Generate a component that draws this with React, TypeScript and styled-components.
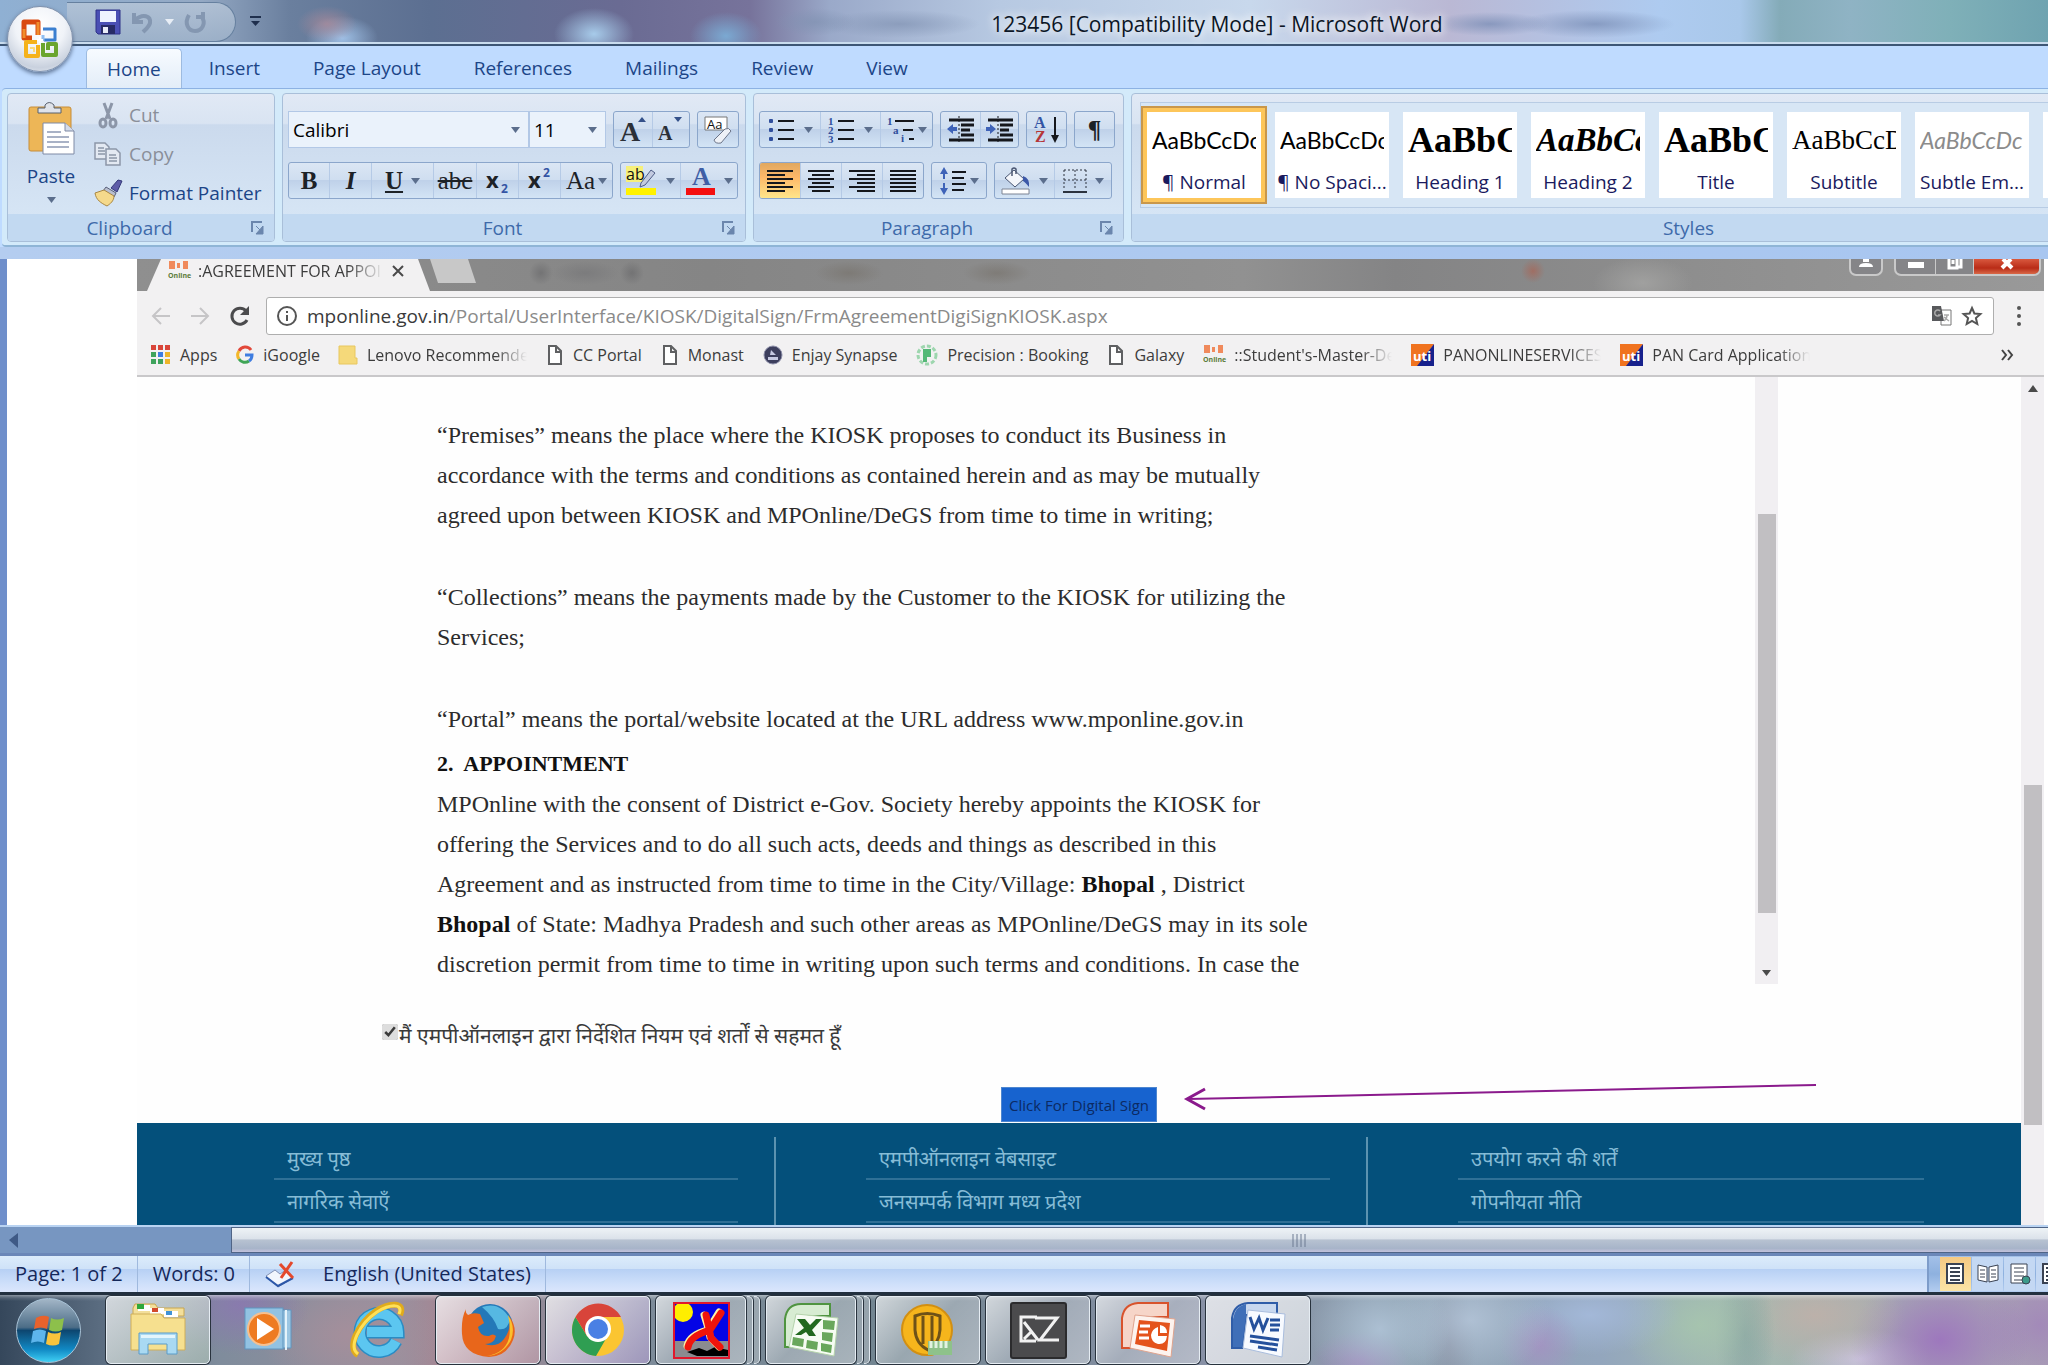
import React from 'react';
import styled, { createGlobalStyle, css } from 'styled-components';

const ui = '"Open Sans", "Noto Sans", sans-serif';
const serif = '"Liberation Serif", serif';
const hindi = '"Noto Sans", "Noto Sans Devanagari", sans-serif';

const Global = createGlobalStyle`
  *, *::before, *::after { box-sizing: border-box; }
  body { margin: 0; background: #fff; font-family: ${ui}; }
  button, select, input { font: inherit; color: inherit; margin: 0; }
  button { padding: 0; border: 0; background: none; }
  svg { display: block; flex: none; overflow: visible; }
`;

const Window = styled.div`
  display: flex;
  flex-direction: column;
  height: 100vh;
  min-height: 900px;
  overflow: hidden;
  background: #bfdbff;
`;

/* ---------- title bar and tabs ---------- */

const Header = styled.header`
  position: relative;
  flex: none;
`;

const TitleBar = styled.div`
  display: flex;
  align-items: center;
  height: 46px;
  padding-left: 67px;
  border-bottom: 2px solid #3d5675;
  box-shadow: inset 0 -2px 0 #c9dcee;
  background:
    radial-gradient(ellipse 30px 18px at 327px 24px, #a98a9acc, transparent),
    radial-gradient(ellipse 36px 22px at 342px 38px, #9fc0e6, transparent),
    radial-gradient(ellipse 40px 26px at 594px 34px, #a7cbea, transparent),
    radial-gradient(ellipse 36px 24px at 726px 36px, #7ba9d2, transparent),
    radial-gradient(ellipse 40px 14px at 815px 22px, #7f91b1aa, transparent),
    radial-gradient(ellipse 80px 14px at 900px 24px, #7f91b1aa, transparent),
    radial-gradient(ellipse 60px 12px at 1490px 24px, #7287b0aa, transparent),
    radial-gradient(ellipse 80px 14px at 1595px 24px, #7287b0aa, transparent),
    linear-gradient(90deg, #8fb0d3 0, #94a9c4 200px, #6a7f9e 290px, #5c6f91 430px, #6a6b93 620px,
      #77739b 750px, #9aa9c9 830px, #b7c9e2 1000px, #c8d8ec 1250px, #bab8d4 1450px,
      #aecbf0 1660px, #a9c8ea 1740px, #84abb8 1780px, #8fb3c4 1850px, #7fb0b8 1950px, #6fa3b0 2048px);
`;

const QuickBar = styled.div`
  display: flex;
  align-items: center;
  gap: 10px;
  width: 169px;
  height: 40px;
  padding-left: 28px;
  border: 1px solid #66809f;
  border-left: 0;
  border-radius: 0 20px 20px 0;
  background: linear-gradient(#b7c6d8cc, #9fb3cacc);
`;

const IconButton = styled.button`
  display: flex;
  align-items: center;
  justify-content: center;
`;

const Customize = styled(IconButton)`
  margin-left: 14px;
`;

const Title = styled.h1`
  flex: 1;
  margin: 0;
  padding: 4px 0 0 125px;
  text-align: center;
  font-size: 21px;
  line-height: 24px;
  font-weight: 400;
  color: #0c1626;
  text-shadow: 0 0 8px #fff, 0 0 12px #fff;
`;

const OfficeButton = styled.button`
  position: absolute;
  top: 6px;
  left: 7px;
  z-index: 2;
  width: 66px;
  height: 66px;
  display: flex;
  align-items: center;
  justify-content: center;
  border: 1px solid #8293ad;
  border-radius: 50%;
  background: radial-gradient(circle at 50% 30%, #fff 0, #f0f3f8 45%, #c9d1de 75%, #eef3fa 100%);
  box-shadow: 0 2px 4px #5a6f8f;
`;

const Tabs = styled.nav`
  display: flex;
  align-items: flex-end;
  gap: 9px;
  height: 42px;
  padding-left: 86px;
  background: #bfdbff;
`;

const Tab = styled.button<{ $active?: boolean }>`
  height: 40px;
  padding: 0 ${p => (p.$active ? 20 : 22)}px;
  font-size: 19px;
  line-height: 24px;
  color: #1c4587;
  border-radius: 5px 5px 0 0;
  ${p => p.$active && css`
    border: 1px solid #9dbbe0;
    border-bottom: 0;
    background: linear-gradient(#f7fbff, #e3edf8);
    margin-right: -4px;
  `}
`;

/* ---------- ribbon ---------- */

const Ribbon = styled.div`
  display: flex;
  flex: none;
  gap: 7px;
  height: 159px;
  margin-left: 2px;
  padding: 4px 0 3px 5px;
  overflow: hidden;
  border-top: 1px solid #8db2e3;
  border-bottom: 2px solid #8fb5d6;
  border-radius: 4px 0 0 4px;
  background: #d3eafa;
`;

const RibbonEdge = styled.div`
  flex: none;
  height: 12px;
  background: linear-gradient(90deg, #b4cdf0, #a8c6f0);
`;

const Group = styled.section<{ $w: number }>`
  display: flex;
  flex-direction: column;
  flex: 0 0 ${p => p.$w}px;
  border: 1px solid #a9bfd9;
  border-radius: 4px;
  overflow: hidden;
  background: linear-gradient(#e1e9f5 0, #d9e4f2 20%, #cbdaed 21%, #d9e8f7 100%);
`;

const GroupBody = styled.div`
  flex: 1;
  display: flex;
  min-height: 0;
`;

const GroupLabel = styled.div`
  display: flex;
  align-items: center;
  height: 27px;
  padding: 0 9px 0 0;
  background: #c2d9f1;
  color: #3e6aaa;
  font-size: 19px;
  line-height: 24px;
  span { flex: 1; text-align: center; }
`;

const Controls = styled.div`
  display: flex;
  flex-direction: column;
  gap: 14px;
  padding: 17px 5px 0 5px;
`;

const ControlRow = styled.div`
  display: flex;
  gap: 7px;
  height: 37px;
`;

const Segment = styled.div`
  display: flex;
  border: 1px solid #8ba6cb;
  border-radius: 3px;
  overflow: hidden;
  background: linear-gradient(#dbe6f4 0, #cfdef0 48%, #bfd1e9 50%, #d3e4f5 100%);
`;

const Cell = styled.button<{ $w: number; $on?: boolean; $tight?: boolean }>`
  display: flex;
  align-items: center;
  justify-content: center;
  gap: ${p => (p.$tight ? 3 : 8)}px;
  width: ${p => p.$w}px;
  font-family: ${serif};
  font-size: 25px;
  line-height: 30px;
  color: #1d2227;
  & + & { border-left: 1px solid #b5cae6; }
  ${p => p.$on && css`background: linear-gradient(#e0a860, #fdb768 40%, #ffe58a);`}
`;

const Combo = styled.label<{ $w: number }>`
  display: flex;
  align-items: center;
  width: ${p => p.$w}px;
  padding: 0 8px 0 4px;
  border: 1px solid #b2c8e6;
  background: #eaf2fb;
  select {
    flex: 1;
    min-width: 0;
    appearance: none;
    border: 0;
    padding: 0;
    background: none;
    font-size: 19px;
    line-height: 24px;
    color: #000;
  }
`;

const Combos = styled.div`display: flex;`;

const PasteButton = styled.button`
  display: flex;
  flex-direction: column;
  align-items: center;
  width: 86px;
  padding: 8px 0 0;
  color: #1c4587;
  font-size: 19px;
  line-height: 24px;
  gap: 9px;
`;

const ClipActions = styled.div`
  display: flex;
  flex-direction: column;
  gap: 13px;
  padding-top: 8px;
`;

const ClipAction = styled.button<{ $off?: boolean }>`
  display: grid;
  grid-template-columns: 28px auto;
  align-items: center;
  gap: 7px;
  height: 26px;
  text-align: left;
  font-size: 19px;
  line-height: 24px;
  white-space: nowrap;
  color: ${p => (p.$off ? '#8a8f99' : '#1c4587')};
`;

const Gallery = styled.div`
  display: flex;
  flex: none;
  gap: 14px;
  width: 1100px;
  height: 106px;
  margin: 8px 0 0 8px;
  padding: 9px 6px;
  border: 1px solid #b8cce4;
  background: #d7e6f5;
`;

const StyleCard = styled.button<{ $on?: boolean }>`
  display: flex;
  flex-direction: column;
  flex: 0 0 114px;
  align-items: center;
  justify-content: space-between;
  height: 86px;
  padding: 7px 0 4px;
  background: #fff;
  ${p => p.$on && css`
    box-shadow: 0 0 0 4px #fdc65a, 0 0 0 6px #c9974a;
  `}
`;

const Sample = styled.span<{ $kind: string }>`
  width: 104px;
  height: 42px;
  overflow: hidden;
  white-space: nowrap;
  text-align: left;
  color: #000;
  ${p => p.$kind === 'body' && css`font: 400 23px/42px Lato, sans-serif;`}
  ${p => p.$kind === 'h1' && css`font: 700 36px/42px ${serif};`}
  ${p => p.$kind === 'h2' && css`font: italic 700 33px/42px ${serif};`}
  ${p => p.$kind === 'sub' && css`font: 400 27px/42px ${serif};`}
  ${p => p.$kind === 'em' && css`font: italic 400 23px/42px Lato, sans-serif; color: #8b8b8b;`}
`;

const StyleName = styled.span`
  font-size: 19px;
  line-height: 24px;
  color: #1a1a5e;
  white-space: nowrap;
`;

/* ---------- document area ---------- */

const Workspace = styled.main`
  display: flex;
  flex: 1;
  min-height: 0;
  padding: 0 4px 0 130px;
  margin-left: 7px;
  background: #fff;
  box-shadow: -7px 0 0 #6f8fcb;
`;

const Browser = styled.div`
  display: flex;
  flex: 1;
  flex-direction: column;
  min-width: 0;
  background: #f2f1f2;
`;

const TabStrip = styled.div`
  display: flex;
  flex: none;
  align-items: flex-start;
  height: 32px;
  background:
    radial-gradient(circle 12px at 404px 14px, #66666899, transparent),
    radial-gradient(circle 12px at 495px 14px, #66666899, transparent),
    radial-gradient(ellipse 34px 12px at 448px 14px, #74747699, transparent),
    radial-gradient(ellipse 34px 12px at 712px 14px, #76716a99, transparent),
    radial-gradient(ellipse 34px 12px at 860px 14px, #76716a99, transparent),
    radial-gradient(circle 12px at 1396px 12px, #a5685acc, transparent),
    radial-gradient(ellipse 50px 26px at 1506px 24px, #a0a09f, transparent),
    linear-gradient(90deg, #8f8f8f, #858585 30%, #919191 58%, #848485 66%, #8d8d8d 80%, #999 100%);
`;

const BrowserTab = styled.div`
  display: flex;
  flex: none;
  align-items: center;
  gap: 8px;
  width: 293px;
  height: 32px;
  padding: 0 0 8px 31px;
  clip-path: polygon(24px 0, 281px 0, 293px 32px, 10px 32px);
  background: #f2f1f2;
`;

const Fade = styled.span<{ $w?: number }>`
  ${p => p.$w && css`
    width: ${p.$w}px;
    overflow: hidden;
    mask-image: linear-gradient(90deg, #000 80%, transparent);
  `}
  white-space: nowrap;
  font-size: 16px;
  line-height: 24px;
  color: #3c3c3c;
`;

const NewTab = styled.button`
  width: 46px;
  height: 24px;
  clip-path: polygon(0 0, 38px 0, 46px 24px, 8px 24px);
  background: #c8c8c8;
`;

const Spacer = styled.div`flex: 1;`;

const Caption = styled.div<{ $gap?: boolean }>`
  display: flex;
  height: 17px;
  margin-right: ${p => (p.$gap ? 11 : 3)}px;
  border: 2px solid #c9c9c9;
  border-top: 0;
  border-radius: 0 0 7px 7px;
  overflow: hidden;
  background: #858588;
`;

const CaptionButton = styled(IconButton)<{ $w: number; $close?: boolean }>`
  align-items: flex-start;
  width: ${p => p.$w}px;
  background: ${p => (p.$close ? 'linear-gradient(#d9583e, #b92c17 60%, #d86847)' : 'none')};
  & + & { border-left: 1px solid #c9c9c9; }
`;

const NavBar = styled.div`
  display: flex;
  flex: none;
  align-items: center;
  gap: 19px;
  height: 46px;
  margin-top: 2px;
  padding: 0 19px 0 14px;
`;

const Omnibox = styled.form`
  display: flex;
  flex: 1;
  align-items: center;
  gap: 10px;
  height: 38px;
  margin-left: -4px;
  padding: 0 11px 0 10px;
  border: 1px solid #aeaeae;
  border-radius: 3px;
  background: #fff;
`;

const Address = styled.div`
  flex: 1;
  font-size: 19px;
  line-height: 24px;
  color: #8a8a8a;
  b { font-weight: 400; color: #3a3a3a; }
`;

const Bookmarks = styled.nav`
  display: flex;
  flex: none;
  align-items: center;
  gap: 19px;
  height: 38px;
  padding: 0 30px 4px 14px;
  border-bottom: 2px solid #c9c8ca;
`;

const Bookmark = styled.a`
  display: flex;
  align-items: center;
  gap: 9px;
  text-decoration: none;
`;

const Viewport = styled.div`
  display: flex;
  flex: 1;
  min-height: 0;
  background: #fefefe;
`;

const Page = styled.div`
  display: flex;
  flex: 1;
  flex-direction: column;
  min-width: 0;
`;

const AgreementFrame = styled.div`
  display: flex;
  flex: none;
  height: 607px;
  margin-right: 243px;
`;

const Agreement = styled.article`
  flex: 1;
  overflow: hidden;
  padding: 38px 440px 0 300px;
  font-family: ${serif};
  font-size: 24px;
  line-height: 40px;
  color: #2c2c2c;
  white-space: nowrap;
  p { margin: 0 0 42px; }
  p.tight { margin: 0; }
  h2 { margin: 0; padding-top: 5px; font-size: 22px; line-height: 40px; color: #111; }
  b { color: #111; }
`;

const Track = styled.div<{ $w: number }>`
  display: flex;
  flex-direction: column;
  align-items: center;
  flex: 0 0 ${p => p.$w}px;
  padding: 8px 0;
  background: #f1eff2;
`;

const Thumb = styled.div<{ $h: number; $top: number }>`
  width: 18px;
  height: ${p => p.$h}px;
  margin-top: ${p => p.$top}px;
  background: #c1bfc2;
`;

const Consent = styled.label`
  display: flex;
  align-items: center;
  gap: 1px;
  height: 28px;
  margin: 37px 0 0 245px;
  font-family: ${hindi};
  font-size: 21px;
  line-height: 28px;
  color: #3a3a3a;
  input { width: 16px; height: 16px; accent-color: #ddd; margin-bottom: 6px; }
`;

const SignRow = styled.div`
  display: flex;
  align-items: flex-start;
  gap: 28px;
  height: 36px;
  margin-top: 38px;
  padding-left: 864px;
`;

const SignButton = styled.button`
  width: 156px;
  height: 35px;
  border: 1px solid #4d86cf;
  background: #1763cf;
  color: #0b2a63;
  font-size: 15px;
  line-height: 24px;
  white-space: nowrap;
`;

const SiteFooter = styled.footer`
  display: grid;
  grid-template-columns: repeat(3, 1fr);
  flex: 1;
  min-height: 0;
  overflow: hidden;
  padding: 14px 61px 0 47px;
  background: #04507b;
`;

const FooterColumn = styled.div`
  padding: 0 36px 0 90px;
  overflow: hidden;
  border-right: 2px solid #5c93b0;
  &:last-child { border-right: 0; }
`;

const FooterLink = styled.a`
  display: block;
  height: 43px;
  padding: 8px 0 0 13px;
  border-bottom: 2px solid #2f7096;
  font-family: ${hindi};
  font-size: 20px;
  line-height: 28px;
  color: #86bcd6;
  text-decoration: none;
  white-space: nowrap;
`;

/* ---------- bottom bars ---------- */

const HScroll = styled.div`
  display: flex;
  flex: none;
  align-items: center;
  height: 31px;
  padding-left: 9px;
  border-top: 2px solid #b9d3f2;
  border-bottom: 3px solid #6b87b8;
  background: #7796c1;
`;

const HThumb = styled.div`
  display: flex;
  flex: 1;
  align-items: center;
  justify-content: center;
  height: 26px;
  margin-left: 213px;
  padding-left: 317px;
  border: 1px solid #4f6486;
  border-right: 0;
  background: linear-gradient(#eef3f6 0, #dbe2ea 45%, #b7c2d1 50%, #a7b4c9 85%, #c3c2dd 100%);
`;

const StatusBar = styled.div`
  display: flex;
  flex: none;
  align-items: stretch;
  height: 39px;
  border-bottom: 3px solid #22303f;
  background: linear-gradient(#dcecfb 0, #cfe2f8 35%, #b7d0f4 37%, #cddffa 75%, #dbe6fc 100%);
  font-size: 20px;
  line-height: 24px;
  color: #15285a;
`;

const StatusItem = styled.div`
  display: flex;
  align-items: center;
  gap: 28px;
  padding: 0 14px 0 15px;
  border-right: 1px solid #9fb9de;
  white-space: nowrap;
`;

const Views = styled.div`
  display: flex;
  align-items: center;
  gap: 1px;
  width: 121px;
  overflow: hidden;
  padding-left: 11px;
  border-left: 2px solid #7d9cca;
  background: linear-gradient(#a3c0e8, #8eb1df 50%, #b4cdf0);
`;

const ViewButton = styled(IconButton)<{ $on?: boolean }>`
  flex: none;
  width: 31px;
  height: 34px;
  background: ${p => (p.$on ? 'linear-gradient(#f5c983, #fbe3a5)' : '#c4d8f3')};
`;

const Taskbar = styled.footer`
  display: flex;
  flex: none;
  align-items: center;
  gap: 6px;
  height: 70px;
  padding-left: 16px;
  background:
    linear-gradient(#ffffff66 0, #ffffff22 3px, transparent 6px),
    radial-gradient(ellipse 70px 50px at 240px 10px, #8c74b4bb, transparent),
    radial-gradient(ellipse 90px 60px at 350px 40px, #a58f9b, transparent),
    radial-gradient(ellipse 70px 60px at 1380px 34px, #b4c8dccc, transparent),
    radial-gradient(ellipse 50px 30px at 1360px 66px, #a184bbcc, transparent),
    radial-gradient(ellipse 80px 60px at 1470px 25px, #b7c8dccc, transparent),
    radial-gradient(ellipse 26px 60px at 1450px 50px, #7f8496aa, transparent),
    radial-gradient(ellipse 40px 40px at 1540px 50px, #a78fc4bb, transparent),
    radial-gradient(ellipse 90px 40px at 1590px 20px, #a3b8d8, transparent),
    radial-gradient(ellipse 80px 60px at 1700px 30px, #a8c8adcc, transparent),
    radial-gradient(ellipse 30px 70px at 1745px 40px, #77949caa, transparent),
    radial-gradient(ellipse 90px 50px at 1815px 20px, #c2b0a8cc, transparent),
    radial-gradient(ellipse 90px 70px at 1940px 45px, #9c70bfdd, transparent),
    radial-gradient(ellipse 70px 30px at 1860px 64px, #d2c6e4cc, transparent),
    radial-gradient(ellipse 60px 60px at 2040px 30px, #a184bacc, transparent),
    linear-gradient(90deg, #35475b 0, #5a6c80 100px, #7f8c9c 220px, #98909e 400px, #a48794 440px,
      #7d8b99 640px, #718490 900px, #8790a5 1200px, #8c9fae 1400px, #93a6bd 1600px, #a3b9b0 1750px, #a9a0b4 2048px);
`;

const StartOrb = styled.button`
  width: 65px;
  height: 65px;
  margin-right: 19px;
  border: 1px solid #a9c4d8;
  border-radius: 50%;
  display: flex;
  align-items: center;
  justify-content: center;
  background: linear-gradient(#a3b6c7 0, #4c6d87 45%, #0d4670 50%, #1189c4 80%, #3fd0f5 100%);
`;

const glass = css`
  border: 1px solid #e6edf3;
  border-radius: 5px;
  box-shadow: 0 0 0 1px #28323d;
  background: linear-gradient(135deg, #ffffffa8, #ffffff48 50%, #ffffff60);
`;

const TaskItem = styled.button<{ $plain?: boolean; $tint?: string }>`
  display: flex;
  align-items: center;
  justify-content: center;
  flex: 1;
  height: 68px;
  ${p => !p.$plain && glass}
  ${p => p.$tint && css`background: linear-gradient(135deg, #ffffffb8, ${p.$tint});`}
`;

const TaskSlot = styled.div`
  display: flex;
  gap: 1px;
  width: 104px;
`;

const StackEdge = styled.div`
  width: 6px;
  height: 68px;
  border: 1px solid #dfe7ee;
  border-left: 0;
  border-radius: 0 5px 5px 0;
  box-shadow: 1px 0 0 #28323d;
  background: #ffffff40;
`;

/* ---------- small drawings ---------- */

const Caret = ({ c = '#5b6e8c' }: { c?: string }) => (
  <svg width="9" height="6" viewBox="0 0 9 6"><path d="M0 0h9L4.500 6z" fill={c} /></svg>
);

const Launcher = () => (
  <svg width="14" height="14" viewBox="0 0 14 14">
    <path d="M1 11V1h10" fill="none" stroke="#6b86ad" strokeWidth="2" />
    <path d="M5 5l6 6M12 5v8H5z" fill="#6b86ad" stroke="#6b86ad" />
  </svg>
);

const OfficeLogo = () => (
  <svg width="42" height="44" viewBox="0 0 42 44" fill="none" strokeLinejoin="round">
    <path d="M19 18V5H5v16h8" stroke="#d9480f" strokeWidth="5" />
    <path d="M19 5v13M5 12v9" stroke="#f08c2c" strokeWidth="3" />
    <path d="M24 12h12v11H25" stroke="#3b7fd0" strokeWidth="3" />
    <path d="M24 18v6" stroke="#8fbdf0" strokeWidth="3" />
    <path d="M18 25H7v14h12V28" stroke="#f5b21b" strokeWidth="4" />
    <path d="M11 31h4v4" stroke="#fbdc7a" strokeWidth="2" />
    <path d="M24 26v12h13V27h-8v6" stroke="#6aa52e" strokeWidth="4" />
    <path d="M21 20v6M18 23h6" stroke="#fff" strokeWidth="2" />
  </svg>
);

const SaveIcon = () => (
  <svg width="26" height="26" viewBox="0 0 26 26">
    <path d="M1 1h24v24H3l-2-2z" fill="#4a4fb4" stroke="#2f3388" />
    <path d="M5 2h16v11H5z" fill="#eef3ff" />
    <path d="M6 16h14v9H6z" fill="#272b66" /><path d="M8 18h5v6H8z" fill="#e9ecf8" />
  </svg>
);

const UndoIcon = () => (
  <svg width="24" height="24" viewBox="0 0 24 24" fill="none" stroke="#8497b1" strokeWidth="4">
    <path d="M3 3v9h9M4 10c8-7 16-4 15 3-1 4-4 6-7 9" />
  </svg>
);

const RedoIcon = () => (
  <svg width="22" height="24" viewBox="0 0 22 24" fill="none" stroke="#8497b1" strokeWidth="4">
    <path d="M5 5c-5 8-1 16 6 16s12-8 6-15M12 7h7V2" />
  </svg>
);

const PasteIcon = () => (
  <svg width="48" height="53" viewBox="0 0 48 53">
    <rect x="2" y="5" width="42" height="44" rx="2" fill="#edb657" stroke="#c68d3a" />
    <path d="M11 9V6h7V3q4-5 9 0v3h7v5H11z" fill="#dfe3ea" stroke="#59606d" />
    <path d="M16 21h22l9 8v23H16z" fill="#fff" stroke="#7f8aa5" />
    <path d="M38 21v8h9" fill="#d4dbea" stroke="#7f8aa5" />
    <path d="M20 30h14M20 35h22M20 40h22M20 45h22" stroke="#a9b2c6" strokeWidth="2" />
  </svg>
);

const CutIcon = () => (
  <svg width="26" height="26" viewBox="0 0 26 26" fill="none" stroke="#8c96a8" strokeWidth="3">
    <path d="M10 1l6 16M18 1l-6 16" /><ellipse cx="9" cy="21" rx="3" ry="4" /><ellipse cx="19" cy="21" rx="3" ry="4" />
  </svg>
);

const CopyIcon = () => (
  <svg width="28" height="24" viewBox="0 0 28 24" fill="#e3e9f2" stroke="#8c96a8" strokeWidth="1.500">
    <path d="M1 1h10l4 4v12H1z" /><path d="M12 7h10l4 4v12H12z" />
    <path d="M4 6h6M4 9h7M4 12h7M15 13h7M15 16h8M15 19h8" />
  </svg>
);

const BrushIcon = () => (
  <svg width="28" height="26" viewBox="0 0 28 26">
    <path d="M17 8l7-8 4 1-5 11z" fill="#5d5ca8" stroke="#333878" />
    <path d="M12 7l10 6-2 4-11-6z" fill="#b9bfd0" stroke="#59607a" />
    <path d="M10 10l10 6c0 5-4 8-7 10C7 23 2 20 1 13z" fill="#f5d98b" stroke="#a98743" />
  </svg>
);

const Grow = ({ up }: { up?: boolean }) => (
  <svg width="27" height="26" viewBox="0 0 27 26">
    <text x="0" y={up ? 24 : 23} fontFamily="Liberation Serif" fontWeight="700" fontSize={up ? 28 : 20} fill="#2b3038">A</text>
    <path d={up ? 'M18 5h8l-4-5z' : 'M16 0h8l-4 5z'} fill="#34518a" />
  </svg>
);

const ClearIcon = () => (
  <svg width="30" height="28" viewBox="0 0 30 28">
    <path d="M2 1h22v13H2z" fill="#fff" stroke="#777" />
    <text x="4" y="13" fontFamily="Open Sans" fontSize="13" fill="#111">Aa</text>
    <path d="M11 24l11-11q4-2 6 2L18 27q-6 1-7-3z" fill="#eef1f7" stroke="#6b7488" />
  </svg>
);

const HighlightIcon = () => (
  <svg width="32" height="30" viewBox="0 0 32 30">
    <path d="M0 0h17v16H0z" fill="#f6f07a" />
    <text x="0" y="14" fontFamily="Open Sans" fontSize="16" fill="#111">ab</text>
    <path d="M15 17L25 4l4 3-10 12-5 2z" fill="#c3cbe0" stroke="#4e5d86" />
    <path d="M0 22h30v7H0z" fill="#fff200" />
  </svg>
);

const FontColorIcon = () => (
  <svg width="30" height="30" viewBox="0 0 30 30">
    <text x="6" y="19" fontFamily="Liberation Serif" fontWeight="700" fontSize="26" fill="#3f5fa6">A</text>
    <path d="M0 22h29v7H0z" fill="#f40f10" />
  </svg>
);

const ScriptIcon = ({ up }: { up?: boolean }) => (
  <svg width="24" height="26" viewBox="0 0 24 26" fontFamily="Open Sans" fontWeight="700">
    <text x="0" y="20" fontSize="22" fill="#1d2227">x</text>
    <text x="15" y={up ? 9 : 25} fontSize="12" fill="#3455a4">2</text>
  </svg>
);

const ListIcon = ({ kind }: { kind: 'dot' | 'num' | 'multi' }) => (
  <svg width="28" height="26" viewBox="0 0 28 26" fontFamily="Liberation Serif" fontWeight="700" fontSize="11" fill="#2f4e9c">
    {kind === 'dot' && [4, 13, 22].map(y => <rect key={y} x="1" y={y - 2} width="4" height="4" rx="1" />)}
    {kind === 'num' && [1, 2, 3].map(n => <text key={n} x="0" y={n * 9 - 1}>{n}</text>)}
    {kind === 'multi' && <><text x="0" y="8">1</text><text x="6" y="17">a</text><text x="14" y="25">i</text></>}
    <path
      d={kind === 'multi' ? 'M8 4h19M16 13h10M22 22h5' : 'M10 4h16M10 13h16M10 22h16'}
      stroke="#15171c" strokeWidth="2" />
  </svg>
);

const IndentIcon = ({ right }: { right?: boolean }) => (
  <svg width="28" height="27" viewBox="0 0 28 27">
    <path d="M2 4h25M14 9h13M14 14h9M14 19h13M2 24h25" stroke="#15171c" strokeWidth="3" />
    <path d="M12 0v27" stroke="#15171c" strokeDasharray="2 2" />
    <path d={right ? 'M10 13L4 8v3H0v4h4v3z' : 'M0 13l6-5v3h4v4H6v3z'} fill="#3f63b8" />
  </svg>
);

const SortIcon = () => (
  <svg width="26" height="28" viewBox="0 0 26 28" fontFamily="Liberation Serif" fontWeight="700" fontSize="16">
    <text x="0" y="12" fill="#3455a4">A</text><text x="1" y="26" fill="#b53538">Z</text>
    <path d="M21 1v23" stroke="#15171c" strokeWidth="2" /><path d="M17 19h8l-4 8z" fill="#15171c" />
  </svg>
);

const AlignIcon = ({ x1, x2 }: { x1: number; x2: number }) => (
  <svg width="26" height="22" viewBox="0 0 26 22" stroke="#15171c" strokeWidth="2">
    <path d={[1, 5, 9, 13, 17, 21].map((y, i) => (i % 2 ? `M${x1} ${y}H${x2}` : `M0 ${y}H26`)).join('')} />
  </svg>
);

const SpacingIcon = () => (
  <svg width="28" height="28" viewBox="0 0 28 28">
    <path d="M5 4v8M5 16v8" stroke="#3f63b8" strokeWidth="2" />
    <path d="M1 7l4-7 4 7zM1 21l4 7 4-7z" fill="#3f63b8" />
    <path d="M13 5h14M13 11h12M13 17h14M13 23h12" stroke="#15171c" strokeWidth="2" />
  </svg>
);

const BucketIcon = () => (
  <svg width="30" height="28" viewBox="0 0 30 28">
    <path d="M4 11L13 3l10 9-9 8z" fill="#f4f6fb" stroke="#4a5672" />
    <path d="M11 9V2q2-2 4 0v5" fill="none" stroke="#4a5672" strokeWidth="1.500" />
    <path d="M22 9q7 2 6 11-4-5-6-6z" fill="#3c58a8" />
    <path d="M1 22h27v5H1z" fill="#fff" stroke="#7c8494" />
  </svg>
);

const BorderIcon = () => (
  <svg width="24" height="24" viewBox="0 0 24 24" fill="none" stroke="#2c333f">
    <path d="M1 1h22M1 11h22M1 1v20M12 1v20M23 1v20" strokeDasharray="2 2" />
    <path d="M0 23h24" strokeWidth="2" />
  </svg>
);

const FileIcon = () => (
  <svg width="18" height="20" viewBox="0 0 18 20" fill="#fff" stroke="#5f6062" strokeWidth="2">
    <path d="M3 1h7l5 5v13H3zM10 1v6h5" />
  </svg>
);

const AppsIcon = () => (
  <svg width="20" height="20" viewBox="0 0 20 20">
    {['#d9463a', '#d9463a', '#d9463a', '#3fa35c', '#3f7de0', '#efb52a', '#3fa35c', '#3fa35c', '#efb52a'].map((c, i) => (
      <rect key={i} x={(i % 3) * 7} y={Math.floor(i / 3) * 7} width="5" height="5" fill={c} />
    ))}
  </svg>
);

const GoogleIcon = () => (
  <svg width="18" height="18" viewBox="0 0 18 18" fill="none" strokeWidth="3">
    <path d="M15 4A7 7 0 0 0 3 5" stroke="#e2483a" /><path d="M3 5a7 7 0 0 0 0 8" stroke="#f3b729" />
    <path d="M3 13a7 7 0 0 0 10 2" stroke="#3fa556" /><path d="M13 15q3-2 3-6H9" stroke="#3f7de0" />
  </svg>
);

const FolderIcon = () => (
  <svg width="19" height="20" viewBox="0 0 19 20"><path d="M0 1h16v12h2v6H0z" fill="#f5d97a" stroke="#e8c75e" /></svg>
);

const OrbIcon = () => (
  <svg width="20" height="20" viewBox="0 0 20 20">
    <circle cx="10" cy="10" r="9" fill="#3d3f5e" stroke="#8c8ea8" />
    <path d="M5 12h10v3H5zM8 5l5 5H7z" fill="#c6c9e2" />
  </svg>
);

const PrecisionIcon = () => (
  <svg width="22" height="22" viewBox="0 0 22 22">
    <circle cx="11" cy="11" r="9" fill="none" stroke="#9dd6ae" strokeWidth="3" strokeDasharray="4 2" />
    <path d="M7 5h8v8h-4v5H7z" fill="#55b877" />
  </svg>
);

const OnlineIcon = () => (
  <svg width="22" height="20" viewBox="0 0 22 20">
    <path d="M1 0h6v8H1zM9 2h3v5H9zM15 0h5v8h-5z" fill="#f08a5c" />
    <text x="0" y="17" fontFamily="Open Sans" fontWeight="700" fontSize="7" fill="#5d7d3c">Online</text>
  </svg>
);

const UtiIcon = () => (
  <svg width="23" height="22" viewBox="0 0 23 22">
    <path d="M0 0h23L8 22H0z" fill="#f0731f" /><path d="M23 0v22H6z" fill="#17218c" />
    <text x="2" y="17" fontFamily="Open Sans" fontWeight="700" fontSize="13" fill="#fff">uti</text>
  </svg>
);

const ArrowNav = ({ right }: { right?: boolean }) => (
  <svg width="20" height="18" viewBox="0 0 20 18" fill="none" stroke="#c6c5c7" strokeWidth="2">
    <path d={right ? 'M1 9h17M10 1l8 8-8 8' : 'M19 9H2M10 1L2 9l8 8'} />
  </svg>
);

const ReloadIcon = () => (
  <svg width="22" height="22" viewBox="0 0 22 22" fill="none" stroke="#4b4b4d" strokeWidth="3">
    <path d="M18 15a8 8 0 1 1-1-9" /><path d="M20 1v9h-9z" fill="#4b4b4d" stroke="none" />
  </svg>
);

const InfoIcon = () => (
  <svg width="20" height="20" viewBox="0 0 20 20" fill="none" stroke="#555" strokeWidth="2">
    <circle cx="10" cy="10" r="9" /><path d="M10 9v6M10 5v2" />
  </svg>
);

const TranslateIcon = () => (
  <svg width="20" height="20" viewBox="0 0 20 20">
    <path d="M9 4h10v15H9z" fill="#fff" stroke="#777" /><path d="M0 0h9l3 15H0z" fill="#58595c" />
    <path d="M8 5a3 3 0 1 0 0 4H6M12 9h5M15 9q0 4-3 6M12 11l5 4" fill="none" stroke="#aaa" strokeWidth="1.500" />
  </svg>
);

const StarIcon = () => (
  <svg width="20" height="20" viewBox="0 0 20 20" fill="none" stroke="#555" strokeWidth="2">
    <path d="M10 2l2.400 5.500 6 .5-4.500 4 1.400 6L10 15l-5.300 3 1.400-6L1.600 8l6-.5z" />
  </svg>
);

const PointerArrow = () => (
  <svg width="632" height="30" viewBox="0 0 632 30" fill="none" stroke="#8a1a8c">
    <path d="M20 2L2 12l18 10" strokeWidth="3" /><path d="M3 12L631 -2" strokeWidth="2" />
  </svg>
);

const WindowsFlag = () => (
  <svg width="42" height="42" viewBox="0 0 42 42">
    <path d="M8 9q7-4 13-1l-2 12q-6-3-13 0z" fill="#e8622c" />
    <path d="M23 9q6 3 13 0l-2 12q-6 3-13 0z" fill="#8dc04b" />
    <path d="M5 22q7-3 13 0l-2 12q-6-3-13 0z" fill="#5db5ec" />
    <path d="M20 23q7 3 13 0l-2 12q-6 3-13 0z" fill="#f8c33c" />
  </svg>
);

const ExplorerIcon = () => (
  <svg width="56" height="54" viewBox="0 0 56 54">
    <path d="M3 5l2-4h20l3 4h26v8H3z" fill="#f3df9a" stroke="#c9a64e" />
    <path d="M8 2h12v6H8z" fill="#fff" /><path d="M7 1h7v5H7z" fill="#2ea83c" />
    <path d="M20 5h14v6H20z" fill="#fff" /><path d="M22 5h6v4h-6z" fill="#d24a2c" />
    <path d="M34 8h14v6H34z" fill="#fff" /><path d="M36 8h6v4h-6z" fill="#3f92d6" />
    <path d="M1 11h30l3 4h21v32H1z" fill="#f6e08f" stroke="#cfae58" />
    <path d="M9 30h38v21H37V41H18v10H9z" fill="#a9d9f2" stroke="#5a9cc9" />
    <path d="M11 32h34v3H11z" fill="#e3f5fd" />
  </svg>
);

const MediaIcon = () => (
  <svg width="48" height="46" viewBox="0 0 48 46">
    <path d="M38 3h9v38h-9z" fill="#9cc6e2" stroke="#5e95bf" /><path d="M42 3v40" stroke="#e4f3fb" strokeWidth="2" />
    <rect x="1" y="1" width="38" height="41" fill="#92c2e2" stroke="#5e95bf" />
    <circle cx="20" cy="22" r="16" fill="#ee7b22" stroke="#f7c08f" strokeWidth="2" />
    <path d="M13 11l17 11-17 11z" fill="#fff" />
  </svg>
);

const IeIcon = () => (
  <svg width="56" height="56" viewBox="0 0 56 56" fill="none">
    <path d="M46 39A19 19 0 1 1 48 30H17" stroke="#2a8cc4" strokeWidth="13" />
    <path d="M46 39A19 19 0 1 1 48 30H17" stroke="#5cc6f0" strokeWidth="10" />
    <path d="M8 53C-4 46 8 22 26 9 40 0 56 0 50 13" stroke="#e0ab1c" strokeWidth="6" />
    <path d="M8 52C-2 45 9 22 27 10 40 2 54 1 49 12" stroke="#ffe057" strokeWidth="3" />
  </svg>
);

const FirefoxIcon = () => (
  <svg width="56" height="56" viewBox="0 0 56 56">
    <circle cx="30" cy="25" r="23" fill="#2478b8" /><path d="M22 5q18-6 28 12-2 12-12 10-4-12-16-22z" fill="#56b8e2" />
    <path d="M6 7q-1 4 2 6 5-3 12-1l4 9-6 4q2 10 11 9 4-3 7 0-2 8-11 8 12 4 19-5 8-10 5-23 9 12 4 24-7 17-24 17Q3 53 2 32 1 16 6 7z" fill="#e8661b" />
    <path d="M48 13q8 12 3 25-8 15-24 16 18-3 22-18 2-10-1-23z" fill="#fbc02d" />
  </svg>
);

const ChromeIcon = () => (
  <svg width="54" height="54" viewBox="0 0 54 54">
    <circle cx="27" cy="27" r="26" fill="#fbc531" />
    <path d="M4.500 14A26 26 0 0 0 25 53L36 34 27 39 16 33z" fill="#2f9e52" />
    <path d="M4.500 14A26 26 0 0 1 50 14H27L16 33z" fill="#d8443a" />
    <circle cx="27" cy="26" r="13" fill="#fff" /><circle cx="27" cy="26" r="10" fill="#4a80e4" />
  </svg>
);

const RunnerIcon = () => (
  <svg width="57" height="57" viewBox="0 0 57 57">
    <path d="M0 0h57v57H0z" fill="#0404e6" /><path d="M0 39h57v18H0z" fill="#8b8b90" />
    <circle cx="10" cy="10" r="10" fill="#ffee00" />
    <path d="M14 50l12-4 8 3 8-4 13 3v6H24z" fill="#000" />
    <path d="M14 44Q16 33 35 28L46 10M31 13l4 13 2 9 9 10" fill="none" stroke="#fff3a8" strokeWidth="7" strokeLinecap="round" />
    <path d="M15 45Q17 34 37 28L48 11M33 13l3 13 2 10 9 9" fill="none" stroke="#f0140c" strokeWidth="7" strokeLinecap="round" />
    <rect x="1" y="1" width="55" height="55" fill="none" stroke="#e0182c" strokeWidth="2" />
  </svg>
);

const ExcelIcon = () => (
  <svg width="56" height="54" viewBox="0 0 56 54">
    <path d="M2 44V16Q4 1 18 1h29v12H14v31z" fill="#d7ecd2" stroke="#4f9440" strokeWidth="2" />
    <path d="M13 11l42 4-4 38-45-9z" fill="#f6fcf3" stroke="#b5d3ac" />
    <path d="M40 17l12 1-1 9-11-1zM39 29l11 1-1 9-10-2zM38 40l11 2-1 8-10-2zM24 37l11 2-1 8-11-2zM10 34l11 2-1 8-11-2z" fill="#69a75c" />
    <path d="M14 16h8l5 6 6-6h6L29 27l4 6h-7l-3-4-5 3h-6l9-7z" fill="#22691f" />
  </svg>
);

const CoinIcon = () => (
  <svg width="54" height="54" viewBox="0 0 54 54">
    <circle cx="26" cy="27" r="25" fill="#f6b51c" stroke="#d28f12" strokeWidth="2" />
    <path d="M14 13q12-5 25 0v14q-1 14-12 20-12-6-13-20zM22 13v28M31 13v28" fill="none" stroke="#6e5218" strokeWidth="3" />
    <path d="M27 38h24v14H27z" fill="#8ec28a" />
    <path d="M30 38v7M35 38v7M40 38v7M45 38v7" stroke="#e2f2e2" strokeWidth="3" />
  </svg>
);

const LzIcon = () => (
  <svg width="57" height="57" viewBox="0 0 57 57">
    <rect x="1" y="1" width="55" height="55" rx="2" fill="#4b4b4d" stroke="#2b2b2d" strokeWidth="2" />
    <path d="M27 15H11v24h15M14 20l14 18M22 29l-8 8M25 16h22L30 38h19" fill="none" stroke="#f2f2f2" strokeWidth="3" />
  </svg>
);

const PptIcon = () => (
  <svg width="56" height="56" viewBox="0 0 56 56">
    <path d="M2 46V16Q4 2 18 1h30v14H16l-4 31z" fill="#f6d5c8" stroke="#d8532c" strokeWidth="2" />
    <path d="M15 13l40 4-4 38-41-9z" fill="#fdf3ee" stroke="#e0a48f" />
    <path d="M19 18l31 3-3 28-32-7z" fill="#e4531c" />
    <path d="M20 24h10M19 30h9M19 36h10" stroke="#fff" strokeWidth="3" />
    <path d="M38 25v9h9q-1 9-9 8-7-2-7-9 1-6 7-8z" fill="#fff" /><path d="M40 23q7 1 7 8h-7z" fill="#fff" />
  </svg>
);

const WordIcon = () => (
  <svg width="56" height="56" viewBox="0 0 56 56">
    <path d="M2 46V16Q4 2 18 1h29v12H16l-4 33z" fill="#c8d8ef" stroke="#2f5da8" strokeWidth="2" />
    <path d="M3 45V17Q5 4 16 2v12l-4 31z" fill="#3f6fb8" />
    <path d="M18 8l37 4-3 43-39-9z" fill="#f7faff" stroke="#a9bddd" />
    <path d="M20 15l4 12 5-11 4 12 5-12M40 18h10M40 23h10M40 28h9M20 34l29 4M20 39l28 4M28 45l19 3" fill="none" stroke="#24509c" strokeWidth="3" />
  </svg>
);

const SpellIcon = () => (
  <svg width="30" height="27" viewBox="0 0 30 27">
    <path d="M1 15l9-6 5 4 6-4 7 8-15 9z" fill="#f2f6fd" stroke="#8290b4" strokeWidth="1" />
    <path d="M1 16l12 9 15-8" fill="none" stroke="#2c57a8" strokeWidth="2" />
    <path d="M15 3l13 14M27 1L16 17" stroke="#e4492c" strokeWidth="3" />
  </svg>
);

const PageView = ({ kind }: { kind: 'print' | 'read' | 'web' }) => (
  <svg width="22" height="22" viewBox="0 0 22 22" stroke="#3a4252" fill="#fff">
    {kind === 'read'
      ? <path d="M1 2l9 2v15l-9-2zM21 2l-9 2v15l9-2zM3 7h5M3 11h5M14 7h5M14 11h5M3 14h5M14 14h5" />
      : <path d="M2 1h16v19H2zM5 5h10M5 9h10M5 13h10M5 17h10" strokeWidth={kind === 'print' ? 2 : 1} />}
    {kind === 'web' && <circle cx="17" cy="17" r="4" fill="#3c9a8a" />}
  </svg>
);

/* ---------- content ---------- */

const tabs = ['Home', 'Insert', 'Page Layout', 'References', 'Mailings', 'Review', 'View'];

const styleCards = [
  ['body', 'AaBbCcDc', '¶ Normal'],
  ['body', 'AaBbCcDc', '¶ No Spaci...'],
  ['h1', 'AaBbC', 'Heading 1'],
  ['h2', 'AaBbCc', 'Heading 2'],
  ['h1', 'AaBbC', 'Title'],
  ['sub', 'AaBbCcD', 'Subtitle'],
  ['em', 'AaBbCcDc', 'Subtle Em...'],
  ['em', '', ''],
];

const bookmarks: { icon: React.ReactNode; text: string; w?: number }[] = [
  { icon: <AppsIcon />, text: 'Apps' },
  { icon: <GoogleIcon />, text: 'iGoogle' },
  { icon: <FolderIcon />, text: 'Lenovo Recommende', w: 160 },
  { icon: <FileIcon />, text: 'CC Portal' },
  { icon: <FileIcon />, text: 'Monast' },
  { icon: <OrbIcon />, text: 'Enjay Synapse' },
  { icon: <PrecisionIcon />, text: 'Precision : Booking' },
  { icon: <FileIcon />, text: 'Galaxy' },
  { icon: <OnlineIcon />, text: "::Student's-Master-De", w: 158 },
  { icon: <UtiIcon />, text: 'PANONLINESERVICES', w: 158 },
  { icon: <UtiIcon />, text: 'PAN Card Application', w: 158 },
];

const footerLinks = [
  ['मुख्य पृष्ठ', 'नागरिक सेवाएँ'],
  ['एमपीऑनलाइन वेबसाइट', 'जनसम्पर्क विभाग मध्य प्रदेश'],
  ['उपयोग करने की शर्तें', 'गोपनीयता नीति'],
];

const tasks: { name: string; icon: React.ReactNode; plain?: boolean; stack?: number; tint?: string }[] = [
  { name: 'Explorer', icon: <ExplorerIcon />, tint: '#b5c9bb90' },
  { name: 'Media Player', icon: <MediaIcon />, plain: true },
  { name: 'Internet Explorer', icon: <IeIcon />, plain: true },
  { name: 'Firefox', icon: <FirefoxIcon />, tint: '#c9a0ae90' },
  { name: 'Chrome', icon: <ChromeIcon />, tint: '#b79fd490' },
  { name: 'Runner', icon: <RunnerIcon />, stack: 2 },
  { name: 'Excel', icon: <ExcelIcon />, stack: 2 },
  { name: 'Coin', icon: <CoinIcon /> },
  { name: 'EZ', icon: <LzIcon /> },
  { name: 'PowerPoint', icon: <PptIcon /> },
  { name: 'Word', icon: <WordIcon />, tint: '#ffffff90' },
];

const Label = ({ text, launch }: { text: string; launch?: boolean }) => (
  <GroupLabel><span>{text}</span>{launch && <IconButton aria-label={`${text} options`}><Launcher /></IconButton>}</GroupLabel>
);

export default function App() {
  return (
    <Window>
      <Global />
      <Header>
        <OfficeButton aria-label="Office"><OfficeLogo /></OfficeButton>
        <TitleBar>
          <QuickBar>
            <IconButton aria-label="Save"><SaveIcon /></IconButton>
            <IconButton aria-label="Undo"><UndoIcon /></IconButton>
            <Caret c="#e8eef6" />
            <IconButton aria-label="Redo"><RedoIcon /></IconButton>
          </QuickBar>
          <Customize aria-label="Customize">
            <svg width="11" height="12" viewBox="0 0 11 12"><path d="M0 1h11" stroke="#1f2f4d" strokeWidth="2" /><path d="M1 5h9L5.500 10z" fill="#1f2f4d" /></svg>
          </Customize>
          <Title>123456 [Compatibility Mode] - Microsoft Word</Title>
        </TitleBar>
        <Tabs>
          {tabs.map((t, i) => <Tab key={t} $active={i === 0}>{t}</Tab>)}
        </Tabs>
      </Header>

      <Ribbon>
        <Group $w={268}>
          <GroupBody>
            <PasteButton><PasteIcon />Paste<Caret /></PasteButton>
            <ClipActions>
              <ClipAction $off><CutIcon />Cut</ClipAction>
              <ClipAction $off><CopyIcon />Copy</ClipAction>
              <ClipAction><BrushIcon />Format Painter</ClipAction>
            </ClipActions>
          </GroupBody>
          <Label text="Clipboard" launch />
        </Group>

        <Group $w={464}>
          <GroupBody>
            <Controls>
              <ControlRow>
                <Combos>
                  <Combo $w={241}><select aria-label="Font"><option>Calibri</option></select><Caret /></Combo>
                  <Combo $w={77}><select aria-label="Size"><option>11</option></select><Caret /></Combo>
                </Combos>
                <Segment>
                  <Cell $w={38} aria-label="Grow font"><Grow up /></Cell>
                  <Cell $w={37} aria-label="Shrink font"><Grow /></Cell>
                </Segment>
                <Segment><Cell $w={40} aria-label="Clear formatting"><ClearIcon /></Cell></Segment>
              </ControlRow>
              <ControlRow>
                <Segment>
                  <Cell $w={40}><b>B</b></Cell>
                  <Cell $w={42}><b><i>I</i></b></Cell>
                  <Cell $w={62}><b><u>U</u></b><Caret /></Cell>
                  <Cell $w={43}><s>abc</s></Cell>
                  <Cell $w={42} aria-label="Subscript"><ScriptIcon /></Cell>
                  <Cell $w={42} aria-label="Superscript"><ScriptIcon up /></Cell>
                  <Cell $w={52} $tight>Aa<Caret /></Cell>
                </Segment>
                <Segment>
                  <Cell $w={59} aria-label="Highlight"><HighlightIcon /><Caret /></Cell>
                  <Cell $w={57} aria-label="Font color"><FontColorIcon /><Caret /></Cell>
                </Segment>
              </ControlRow>
            </Controls>
          </GroupBody>
          <Label text="Font" launch />
        </Group>

        <Group $w={371}>
          <GroupBody>
            <Controls>
              <ControlRow>
                <Segment>
                  <Cell $w={60} aria-label="Bullets"><ListIcon kind="dot" /><Caret /></Cell>
                  <Cell $w={60} aria-label="Numbering"><ListIcon kind="num" /><Caret /></Cell>
                  <Cell $w={52} $tight aria-label="Multilevel list"><ListIcon kind="multi" /><Caret /></Cell>
                </Segment>
                <Segment>
                  <Cell $w={39} aria-label="Decrease indent"><IndentIcon /></Cell>
                  <Cell $w={38} aria-label="Increase indent"><IndentIcon right /></Cell>
                </Segment>
                <Segment><Cell $w={39} aria-label="Sort"><SortIcon /></Cell></Segment>
                <Segment><Cell $w={39}><b>¶</b></Cell></Segment>
              </ControlRow>
              <ControlRow>
                <Segment>
                  <Cell $w={40} $on aria-label="Align left"><AlignIcon x1={0} x2={18} /></Cell>
                  <Cell $w={41} aria-label="Center"><AlignIcon x1={4} x2={22} /></Cell>
                  <Cell $w={41} aria-label="Align right"><AlignIcon x1={8} x2={26} /></Cell>
                  <Cell $w={41} aria-label="Justify"><AlignIcon x1={0} x2={26} /></Cell>
                </Segment>
                <Segment><Cell $w={54} $tight aria-label="Line spacing"><SpacingIcon /><Caret /></Cell></Segment>
                <Segment>
                  <Cell $w={59} aria-label="Shading"><BucketIcon /><Caret /></Cell>
                  <Cell $w={57} aria-label="Borders"><BorderIcon /><Caret /></Cell>
                </Segment>
              </ControlRow>
            </Controls>
          </GroupBody>
          <Label text="Paragraph" launch />
        </Group>

        <Group $w={1124}>
          <GroupBody>
            <Gallery>
              {styleCards.map(([kind, sample, name], i) => (
                <StyleCard key={name} $on={i === 0}>
                  <Sample $kind={kind}>{sample}</Sample>
                  <StyleName>{name}</StyleName>
                </StyleCard>
              ))}
            </Gallery>
          </GroupBody>
          <Label text="Styles" />
        </Group>
      </Ribbon>
      <RibbonEdge />

      <Workspace>
        <Browser>
          <TabStrip>
            <BrowserTab>
              <OnlineIcon />
              <Fade $w={186}>:AGREEMENT FOR APPOI</Fade>
              <svg width="12" height="12" viewBox="0 0 12 12"><path d="M1 1l10 10M11 1L1 11" stroke="#4a4a4a" strokeWidth="2" /></svg>
            </BrowserTab>
            <NewTab aria-label="New tab" />
            <Spacer />
            <Caption $gap>
              <CaptionButton $w={30} aria-label="User">
                <svg width="16" height="9" viewBox="0 0 16 9"><path d="M1 8q0-4 7-4 7 0 7 4zM5 0h6v3H5z" fill="#fff" /></svg>
              </CaptionButton>
            </Caption>
            <Caption>
              <CaptionButton $w={39} aria-label="Minimize"><svg width="16" height="9"><path d="M0 3h16v6H0z" fill="#fff" /></svg></CaptionButton>
              <CaptionButton $w={38} aria-label="Restore">
                <svg width="16" height="12" viewBox="0 0 16 12" fill="none" stroke="#fff" strokeWidth="3"><path d="M2 0v9h8V0M14 0v8h-3M6 1v4" /></svg>
              </CaptionButton>
              <CaptionButton $w={66} $close aria-label="Close"><svg width="14" height="10" viewBox="0 0 14 10"><path d="M3 0l9 9M11 0L2 9" stroke="#fff" strokeWidth="4" /></svg></CaptionButton>
            </Caption>
          </TabStrip>
          <NavBar>
            <IconButton aria-label="Back"><ArrowNav /></IconButton>
            <IconButton aria-label="Forward"><ArrowNav right /></IconButton>
            <IconButton aria-label="Reload"><ReloadIcon /></IconButton>
            <Omnibox>
              <InfoIcon />
              <Address><b>mponline.gov.in</b>/Portal/UserInterface/KIOSK/DigitalSign/FrmAgreementDigiSignKIOSK.aspx</Address>
              <TranslateIcon />
              <StarIcon />
            </Omnibox>
            <IconButton aria-label="Menu">
              <svg width="12" height="22" viewBox="0 0 12 22" fill="#555"><circle cx="6" cy="3" r="2" /><circle cx="6" cy="11" r="2" /><circle cx="6" cy="19" r="2" /></svg>
            </IconButton>
          </NavBar>
          <Bookmarks>
            {bookmarks.map(b => (
              <Bookmark key={b.text} href="#">{b.icon}<Fade $w={b.w}>{b.text}</Fade></Bookmark>
            ))}
            <Spacer />
            <svg width="13" height="12" viewBox="0 0 13 12" fill="none" stroke="#444" strokeWidth="2"><path d="M1 1l4 5-4 5M7 1l4 5-4 5" /></svg>
          </Bookmarks>
          <Viewport>
            <Page>
              <AgreementFrame>
                <Agreement>
                  <p>“Premises” means the place where the KIOSK proposes to conduct its Business in<br />
                    accordance with the terms and conditions as contained herein and as may be mutually<br />
                    agreed upon between KIOSK and MPOnline/DeGS from time to time in writing;</p>
                  <p>“Collections” means the payments made by the Customer to the KIOSK for utilizing the<br />
                    Services;</p>
                  <p className="tight">“Portal” means the portal/website located at the URL address www.mponline.gov.in</p>
                  <h2>2.&nbsp; APPOINTMENT</h2>
                  <p>MPOnline with the consent of District e-Gov. Society hereby appoints the KIOSK for<br />
                    offering the Services and to do all such acts, deeds and things as described in this<br />
                    Agreement and as instructed from time to time in the City/Village: <b>Bhopal</b> , District<br />
                    <b>Bhopal</b> of State: Madhya Pradesh and such other areas as MPOnline/DeGS may in its sole<br />
                    discretion permit from time to time in writing upon such terms and conditions. In case the</p>
                </Agreement>
                <Track $w={23}>
                  <Thumb $h={399} $top={129} />
                  <Spacer />
                  <Caret c="#4a4a4a" />
                </Track>
              </AgreementFrame>
              <Consent>
                <input type="checkbox" defaultChecked />
                मैं एमपीऑनलाइन द्वारा निर्देशित नियम एवं शर्तों से सहमत हूँ
              </Consent>
              <SignRow>
                <SignButton>Click For Digital Sign</SignButton>
                <PointerArrow />
              </SignRow>
              <SiteFooter>
                {footerLinks.map(col => (
                  <FooterColumn key={col[0]}>
                    {col.map(t => <FooterLink key={t} href="#">{t}</FooterLink>)}
                  </FooterColumn>
                ))}
              </SiteFooter>
            </Page>
            <Track $w={23}>
              <svg width="10" height="7" viewBox="0 0 10 7"><path d="M5 0l5 7H0z" fill="#4a4a4a" /></svg>
              <Thumb $h={340} $top={393} />
            </Track>
          </Viewport>
        </Browser>
      </Workspace>

      <HScroll>
        <IconButton aria-label="Scroll left"><svg width="9" height="15" viewBox="0 0 9 15"><path d="M9 0v15L0 7z" fill="#3f5a86" /></svg></IconButton>
        <HThumb>
          <svg width="14" height="13" viewBox="0 0 14 13" stroke="#6d7b92"><path d="M1 0v13M5 0v13M9 0v13M13 0v13" /></svg>
        </HThumb>
      </HScroll>
      <StatusBar>
        <StatusItem>Page: 1 of 2</StatusItem>
        <StatusItem>Words: 0</StatusItem>
        <StatusItem><SpellIcon />English (United States)</StatusItem>
        <Spacer />
        <Views>
          <ViewButton $on aria-label="Print layout"><PageView kind="print" /></ViewButton>
          <ViewButton aria-label="Full screen reading"><PageView kind="read" /></ViewButton>
          <ViewButton aria-label="Web layout"><PageView kind="web" /></ViewButton>
          <ViewButton aria-label="Outline"><PageView kind="print" /></ViewButton>
        </Views>
      </StatusBar>
      <Taskbar>
        <StartOrb aria-label="Start"><WindowsFlag /></StartOrb>
        {tasks.map(t => (
          <TaskSlot key={t.name}>
            <TaskItem $plain={t.plain} $tint={t.tint} aria-label={t.name}>{t.icon}</TaskItem>
            {Array.from({ length: t.stack ?? 0 }, (_, i) => <StackEdge key={i} />)}
          </TaskSlot>
        ))}
      </Taskbar>
    </Window>
  );
}
